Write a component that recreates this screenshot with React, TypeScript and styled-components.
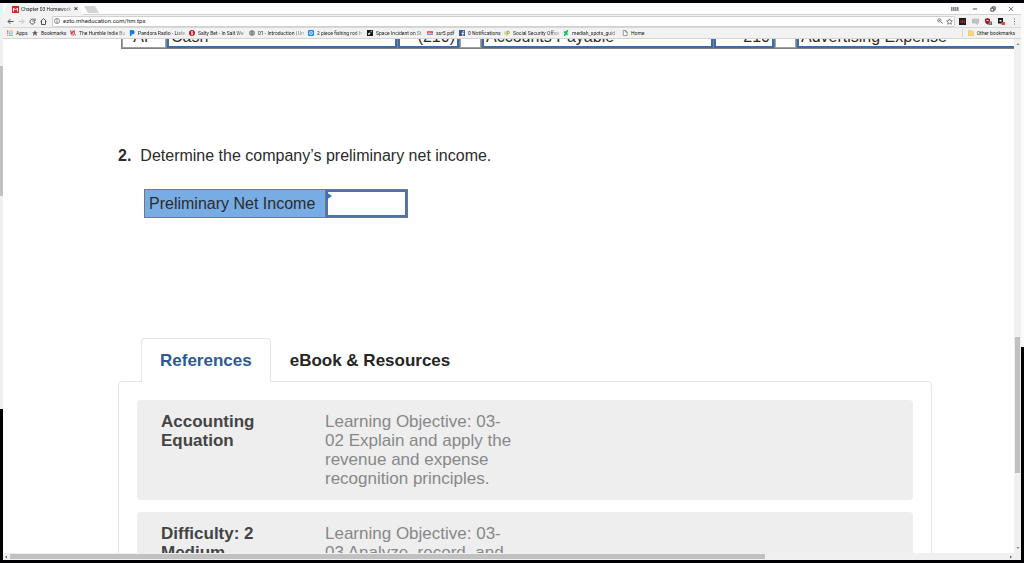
import React, { useState } from "react";
import styled, { createGlobalStyle, css } from "styled-components";

const GlobalStyle = createGlobalStyle`
  *, *::before, *::after { box-sizing: border-box; }
  html, body, #root { height: 100%; }
  body {
    margin: 0;
    background: #000004;
    overflow: hidden;
    font-family: "Liberation Sans", Arial, sans-serif;
    color: #2b2b2b;
  }
  button, input { font: inherit; color: inherit; }
  button { background: none; border: 0; padding: 0; cursor: pointer; }
`;

const Desktop = styled.div`
  display: flex;
  flex-direction: column;
  height: 100vh;
  padding: 3px 0;
`;

const DesktopRow = styled.div`
  display: flex;
  flex: 1;
  min-height: 0;
`;

const EdgeStrip = styled.div`
  display: flex;
  flex-direction: column;
  flex: 0 0 3px;
`;

const EdgePart = styled.div<{ $share: number; $color: string }>`
  flex: ${(p) => p.$share} 1 0;
  background: ${(p) => p.$color};
`;

const BrowserWindow = styled.div`
  display: flex;
  flex-direction: column;
  flex: 1;
  min-width: 0;
  background: #fff;
`;

/* ---------- browser chrome ---------- */

const Chrome = styled.header`
  font-family: Roboto, "Open Sans", sans-serif;
  font-size: 5px;
  line-height: 8px;
  color: #222;
`;

const TabStrip = styled.div`
  display: flex;
  height: 12px;
  background: #fdfdfd;
  border-bottom: 1px solid #d0d0d0;
`;

const PageTab = styled.div`
  display: flex;
  align-items: center;
  gap: 2px;
  width: 80px;
  height: 12px;
  padding: 0 5px 0 9px;
  background: #f2f2f2;
  clip-path: polygon(5px 0, 74px 0, 100% 100%, 0 100%);
`;

const FadingText = styled.span`
  flex: 1;
  min-width: 0;
  white-space: nowrap;
  mask-image: linear-gradient(to right, #000 calc(100% - 10px), rgba(0, 0, 0, 0.3));
`;

const TabClose = styled.button`
  font-size: 8px;
  line-height: 8px;
`;

const NewTab = styled.button`
  width: 15px;
  height: 7px;
  margin: 3px 0 0 1px;
  background: #d4d4d4;
  clip-path: polygon(0 0, 11px 0, 100% 100%, 4px 100%);
`;

const WindowControls = styled.div`
  display: flex;
  align-items: center;
  gap: 11px;
  margin-left: auto;
  padding-right: 7px;
`;

const IconButton = styled.button`
  display: flex;
  align-items: center;
  justify-content: center;
  width: 7px;
  height: 8px;
`;

const ProfileButton = styled.button`
  width: 8px;
  height: 4px;
  margin-right: 1px;
  background: repeating-linear-gradient(to right, #888 0 1px, #bbb 1px 2px);
`;

const Toolbar = styled.div`
  display: flex;
  align-items: center;
  height: 13px;
  padding: 0 3px 0 4px;
  background: #f2f2f2;
  border-bottom: 1px solid #d8d8d8;
`;

const NavButtons = styled.nav`
  display: flex;
  gap: 4px;
  width: 45px;
`;

const Omnibox = styled.div`
  display: flex;
  align-items: center;
  flex: 1;
  height: 11px;
  padding: 0 1px;
  gap: 3px;
  background: #fff;
  border: 1px solid #d0d0d0;
  border-radius: 1px;
`;

const AddressInput = styled.input`
  flex: 1;
  min-width: 0;
  height: 8px;
  padding: 0;
  border: 0;
  outline: 0;
  background: transparent;
  font-size: 6px;
`;

const Extensions = styled.div`
  display: flex;
  align-items: center;
  gap: 6px;
  padding-left: 4px;
`;

const BookmarkBar = styled.nav`
  display: flex;
  align-items: center;
  height: 11px;
  padding: 0 6px 0 4px;
  background: #f2f2f2;
  border-bottom: 1px solid #d4d4d4;
`;

const Bookmark = styled.a<{ $width: number }>`
  display: flex;
  align-items: center;
  gap: 3px;
  flex: 0 0 ${(p) => p.$width}px;
  min-width: 0;
  padding-right: 4px;
  color: inherit;
  text-decoration: none;
`;

const PlainText = styled.span`
  white-space: nowrap;
`;

const OtherBookmarks = styled.button`
  display: flex;
  align-items: center;
  gap: 3px;
  margin-left: auto;
  padding-left: 5px;
  border-left: 1px solid #d4d4d4;
`;

/* ---------- scroll bars ---------- */

const Viewport = styled.div`
  display: flex;
  flex: 1;
  min-height: 0;
`;

const VerticalBar = styled.div`
  display: flex;
  flex-direction: column;
  align-items: center;
  flex: 0 0 7px;
  padding: 3px 0;
  background: #f0f0f0;
`;

const HorizontalBar = styled.div`
  display: flex;
  align-items: center;
  flex: 0 0 7px;
  padding: 0 8px 0 1px;
  background: #f0f0f0;
`;

const Track = styled.div<{ $vertical?: boolean }>`
  display: flex;
  flex: 1;
  ${(p) =>
    p.$vertical
      ? css`
          flex-direction: column;
          width: 5px;
        `
      : css`
          height: 5px;
          margin: 0 2px;
        `}
`;

/* ---------- page ---------- */

const Page = styled.main`
  flex: 1;
  min-width: 0;
  overflow: hidden;
  font-size: 16px;
  line-height: 19px;
`;

const LedgerClip = styled.div`
  display: flex;
  align-items: flex-end;
  height: 10px;
  padding-left: 118px;
  overflow: hidden;
`;

const Ledger = styled.table`
  flex: none;
  width: calc(100% + 20px);
  table-layout: fixed;
  border-collapse: collapse;
`;

const LedgerCell = styled.td<{ $entry?: boolean; $align?: string }>`
  height: 28px;
  padding: 0 4px 2px;
  border: 1px solid #808080;
  box-shadow: inset 0 0 0 ${(p) => (p.$entry ? "2px #3b6dad" : "1px #a0a0a0")};
  text-align: ${(p) => p.$align || "left"};
  vertical-align: bottom;
  white-space: nowrap;
`;

const Question = styled.section`
  padding: 97px 0 0 115px;
`;

const Prompt = styled.p`
  display: flex;
  gap: 9px;
  margin: 0;
`;

const AnswerTable = styled.table`
  margin: 24px 0 0 26px;
  border-collapse: collapse;
  border: 1px solid #777;
`;

const AnswerLabel = styled.th`
  width: 181px;
  height: 28px;
  padding: 0 4px;
  background: #78ace5;
  border: 1px solid #777;
  font-weight: 400;
  text-align: left;
  white-space: nowrap;
`;

const AnswerCell = styled.td`
  position: relative;
  width: 82px;
  padding: 0;
`;

const AnswerInput = styled.input`
  display: block;
  width: 100%;
  height: 27px;
  padding: 0 6px;
  border: 2px solid #4674b5;
  outline: 0;
  background: #fff;
`;

const CellMarker = styled.span`
  position: absolute;
  top: 2px;
  left: 0;
  width: 6px;
  height: 8px;
  background: #3a6fba;
  clip-path: polygon(0 0, 100% 50%, 0 100%);
`;

const Resources = styled.section`
  margin: 120px 82px 0 115px;
`;

const TabList = styled.div`
  display: flex;
  padding-left: 23px;
`;

const ResourceTab = styled.button<{ $active: boolean }>`
  position: relative;
  height: 44px;
  padding: 0 18px;
  margin-bottom: -1px;
  border: 1px solid ${(p) => (p.$active ? "#e6e6e6" : "transparent")};
  border-bottom: 0;
  border-radius: 4px 4px 0 0;
  background: ${(p) => (p.$active ? "#fff" : "transparent")};
  color: ${(p) => (p.$active ? "#2c5a94" : "#262626")};
  font-size: 17px;
  font-weight: 700;
`;

const Panel = styled.div`
  display: flex;
  flex-direction: column;
  gap: 12px;
  padding: 18px;
  border: 1px solid #e6e6e6;
  border-radius: 4px;
`;

const Card = styled.article`
  display: flex;
  gap: 40px;
  padding: 12px 24px;
  background: #eee;
  border-radius: 4px;
`;

const CardTitle = styled.h3`
  width: 124px;
  margin: 0;
  color: #444;
  font-size: 17px;
`;

const CardText = styled.p`
  width: 192px;
  margin: 0;
  color: #888;
  font-size: 17px;
`;

/* ---------- icons ---------- */

const drawings: Record<string, React.ReactNode> = {
  mcgraw: (
    <>
      <path d="M0 0h14v14H0z" fill="#df2027" />
      <path d="M3 11V4l4 4 4-4v7" fill="none" stroke="#fff" strokeWidth="2" />
    </>
  ),
  back: <path d="M13 7H2M7 2L2 7l5 5" fill="none" stroke="#555" strokeWidth="2" />,
  forward: <path d="M1 7h11M7 2l5 5-5 5" fill="none" stroke="#c8c8c8" strokeWidth="2" />,
  reload: <path d="M12 8A5 5 0 1 1 10.500 3.500M12 1v5H7" fill="none" stroke="#555" strokeWidth="2" />,
  home: <path d="M1 7l6-6 6 6M3 6v7h8V6" fill="none" stroke="#555" strokeWidth="2" />,
  info: (
    <>
      <circle cx="7" cy="7" r="6" fill="none" stroke="#555" strokeWidth="1.500" />
      <path d="M7 6v5M7 3v2" stroke="#555" strokeWidth="2" />
    </>
  ),
  apps: (
    <>
      <path d="M0 1h3v3H0zM0 6h3v3H0z" fill="#e65243" />
      <path d="M5 1h3v3H5zM10 1h3v3h-3zM0 11h3v3H0z" fill="#f0a030" />
      <path d="M5 6h3v3H5zM10 6h3v3h-3z" fill="#4a90e2" />
      <path d="M5 11h3v3H5zM10 11h3v3h-3z" fill="#45ad5a" />
    </>
  ),
  star: <path d="M7 0l2 5h5l-4 3 2 6-5-4-5 4 2-6-4-3h5z" fill="#555" />,
  starLine: <path d="M7 1.500l1.700 3.800 4 .5-3 2.700.8 4L7 10.500l-3.500 2 .8-4-3-2.700 4-.5z" fill="none" stroke="#555" strokeWidth="1.500" />,
  humble: <path d="M1 1l4 12M5 1v7l5-7v6l3 6M1 8l5-3M8 13l-1-5" fill="none" stroke="#cb2d35" strokeWidth="2" />,
  pandora: <path d="M2 0h6c7 0 7 10 0 10H6v4H2z" fill="#167ee6" />,
  salty: (
    <>
      <circle cx="7" cy="7" r="7" fill="#c2182b" />
      <path d="M9 4H6v3h3v3H5M7 2v10" fill="none" stroke="#fff" strokeWidth="1.500" />
    </>
  ),
  globe: (
    <>
      <circle cx="7" cy="7" r="6.500" fill="#666" />
      <path d="M1 5h12M1 9h12M5 1c-2 5-1 8 0 12M9 1c2 5 1 8 0 12" fill="none" stroke="#ddd" />
    </>
  ),
  fishing: (
    <>
      <rect width="14" height="14" rx="3" fill="#1686ef" />
      <circle cx="7" cy="7" r="4" fill="none" stroke="#fff" strokeWidth="1.500" />
      <path d="M5 7h4" stroke="#fff" strokeWidth="2" />
    </>
  ),
  space: (
    <>
      <path d="M0 0h14v14H0z" fill="#181818" />
      <path d="M8 3l4-2-2 5zM2 9l5-4 1 4-4 3z" fill="#eee" />
    </>
  ),
  ssr: (
    <>
      <path d="M0 3h14v4H0z" fill="#e33" />
      <path d="M0 8h14v3H0z" fill="#5366d6" />
      <path d="M2 7h10" stroke="#fff" strokeWidth="2" strokeDasharray="2 1" />
    </>
  ),
  facebook: (
    <>
      <path d="M0 0h14v14H0z" fill="#3b5998" />
      <path d="M12 3h-1c-2 0-2 1-2 3v8M6 8h6" fill="none" stroke="#fff" strokeWidth="2" />
    </>
  ),
  social: (
    <>
      <path d="M0 4h5v2H0zM0 8h5v2H0z" fill="#b9c51d" />
      <path d="M7 13V3h3c4 0 4 5 0 5H7" fill="none" stroke="#8a9a1a" strokeWidth="2" />
    </>
  ),
  deviant: <path d="M12 0v3L9 8h3v3H7l-2 3H2v-3l3-4H2V3h5l2-3z" fill="#09ca4d" />,
  file: <path d="M3 1h5l4 4v8H3zM8 1v4h4" fill="#fff" stroke="#666" strokeWidth="1.500" />,
  folder: <path d="M0 1h8l1 2h4v11H0z" fill="#f6d77b" stroke="#e6c25e" />,
  zoom: (
    <>
      <circle cx="5.500" cy="5.500" r="4" fill="none" stroke="#555" strokeWidth="1.500" />
      <path d="M9 9l4 4M4 5.500h3" stroke="#555" strokeWidth="2" />
    </>
  ),
  extRed: (
    <>
      <path d="M0 0h14v14H0z" fill="#1c1c1c" />
      <path d="M2 4l3 6 2-6v6M9 4h3M9 7h3M12 7v3H9" fill="none" stroke="#b3332c" strokeWidth="1.500" />
    </>
  ),
  cast: <path d="M0 2h14v8H9l2 3-5-3H0z" fill="#c4c4c4" stroke="#aaa" />,
  shield: (
    <>
      <path d="M5 0l5 2v4c0 4-3 6-5 7-2-1-5-3-5-7V2z" fill="#a5141b" />
      <path d="M3 5h4" stroke="#fff" strokeWidth="2" />
      <path d="M7 7h7v7H7z" fill="#666" />
      <path d="M10.500 8v5" stroke="#fff" />
    </>
  ),
  blocker: (
    <>
      <path d="M0 0h10v11H0z" fill="#171717" />
      <path d="M3 4h4v3H3z" fill="#fff" />
      <path d="M7 8h7v6H7z" fill="#f04444" />
    </>
  ),
  menu: <path d="M6 1h2v2H6zM6 6h2v2H6zM6 11h2v2H6z" fill="#666" />,
  minimize: <path d="M2 7h10" stroke="#333" strokeWidth="2" />,
  restore: <path d="M2 5h7v7H2zM5 5V2h7v7H9" fill="none" stroke="#333" strokeWidth="2" />,
  close: <path d="M2 2l10 10M12 2L2 12" stroke="#333" strokeWidth="1.500" />,
  up: <path d="M2 10l5-6 5 6z" fill="#555" />,
  down: <path d="M2 4l5 6 5-6z" fill="#555" />,
  left: <path d="M10 2L4 7l6 5z" fill="#555" />,
  right: <path d="M4 2l6 5-6 5z" fill="#555" />,
};

const Drawing = styled.svg`
  flex: none;
`;

function Icon({ name, size = 7 }: { name: string; size?: number }) {
  return (
    <Drawing width={size} height={size} viewBox="0 0 14 14" aria-hidden="true">
      {drawings[name]}
    </Drawing>
  );
}

const bookmarks = [
  { icon: "apps", label: "Apps", width: 25, whole: true },
  { icon: "star", label: "Bookmarks", width: 38, whole: true },
  { icon: "humble", label: "The Humble Indie Bu", width: 59 },
  { icon: "pandora", label: "Pandora Radio - Liste", width: 60 },
  { icon: "salty", label: "Salty Bet - In Salt We", width: 60 },
  { icon: "globe", label: "01 - Introduction | Un", width: 59 },
  { icon: "fishing", label: "2 piece fishing rod h", width: 59 },
  { icon: "space", label: "Space Incident on St", width: 60 },
  { icon: "ssr", label: "ssr5.pdf", width: 32, whole: true },
  { icon: "facebook", label: "0 Notifications", width: 45, whole: true },
  { icon: "social", label: "Social Security Office", width: 59 },
  { icon: "deviant", label: "mediah_spots_guid", width: 59 },
  { icon: "file", label: "Home", width: 30, whole: true },
];

const ledgerColumns = [45, 231, 62, 22, 232, 61, 22];

const cards = [
  {
    title: "Accounting Equation",
    objective: "Learning Objective: 03-",
    text: "02 Explain and apply the revenue and expense recognition principles.",
  },
  {
    title: "Difficulty: 2 Medium",
    objective: "Learning Objective: 03-",
    text: "03 Analyze, record, and post transactions.",
  },
];

function BrowserChrome() {
  return (
    <Chrome>
      <TabStrip>
        <PageTab>
          <Icon name="mcgraw" />
          <FadingText>Chapter 03 Homework A</FadingText>
          <TabClose aria-label="Close tab">×</TabClose>
        </PageTab>
        <NewTab aria-label="New tab" />
        <WindowControls>
          <ProfileButton aria-label="Profile" />
          <IconButton aria-label="Minimize"><Icon name="minimize" size={6} /></IconButton>
          <IconButton aria-label="Restore"><Icon name="restore" size={6} /></IconButton>
          <IconButton aria-label="Close"><Icon name="close" size={6} /></IconButton>
        </WindowControls>
      </TabStrip>
      <Toolbar>
        <NavButtons>
          {["back", "forward", "reload", "home"].map((name) => (
            <IconButton key={name} aria-label={name}><Icon name={name} /></IconButton>
          ))}
        </NavButtons>
        <Omnibox>
          <Icon name="info" size={6} />
          <AddressInput aria-label="Address" defaultValue="ezto.mheducation.com/hm.tpx" />
          <IconButton aria-label="Zoom"><Icon name="zoom" size={6} /></IconButton>
          <IconButton aria-label="Bookmark this page"><Icon name="starLine" size={7} /></IconButton>
        </Omnibox>
        <Extensions>
          {["extRed", "cast", "shield", "blocker", "menu"].map((name) => (
            <IconButton key={name} aria-label={name}><Icon name={name} /></IconButton>
          ))}
        </Extensions>
      </Toolbar>
      <BookmarkBar>
        {bookmarks.map(({ icon, label, width, whole }) => (
          <Bookmark key={label} href="#" $width={width}>
            <Icon name={icon} size={6} />
            {whole ? <PlainText>{label}</PlainText> : <FadingText>{label}</FadingText>}
          </Bookmark>
        ))}
        <OtherBookmarks>
          <Icon name="folder" size={6} />
          <PlainText>Other bookmarks</PlainText>
        </OtherBookmarks>
      </BookmarkBar>
    </Chrome>
  );
}

export default function App() {
  const [active, setActive] = useState(0);
  return (
    <>
      <GlobalStyle />
      <Desktop>
        <DesktopRow>
          <EdgeStrip>
            <EdgePart $share={63} $color="#f0f0f0" />
            <EdgePart $share={130} $color="#c1c1c1" />
            <EdgePart $share={213} $color="#f0f0f0" />
            <EdgePart $share={151} $color="#000004" />
          </EdgeStrip>
          <BrowserWindow>
            <BrowserChrome />
            <Viewport>
              <Page>
                <LedgerClip>
                  <Ledger>
                    <colgroup>
                      {ledgerColumns.map((width, i) => (
                        <col key={i} width={width} />
                      ))}
                      <col />
                    </colgroup>
                    <tbody>
                      <tr>
                        <LedgerCell $align="center">AP</LedgerCell>
                        <LedgerCell $entry>Cash</LedgerCell>
                        <LedgerCell $entry $align="right">(210)</LedgerCell>
                        <LedgerCell />
                        <LedgerCell $entry>Accounts Payable</LedgerCell>
                        <LedgerCell $entry $align="right">210</LedgerCell>
                        <LedgerCell />
                        <LedgerCell $entry>Advertising Expense</LedgerCell>
                      </tr>
                    </tbody>
                  </Ledger>
                </LedgerClip>
                <Question>
                  <Prompt>
                    <b>2.</b>
                    <span>Determine the company’s preliminary net income.</span>
                  </Prompt>
                  <AnswerTable>
                    <tbody>
                      <tr>
                        <AnswerLabel scope="row">
                          <label htmlFor="net-income">Preliminary Net Income</label>
                        </AnswerLabel>
                        <AnswerCell>
                          <AnswerInput id="net-income" />
                          <CellMarker />
                        </AnswerCell>
                      </tr>
                    </tbody>
                  </AnswerTable>
                </Question>
                <Resources>
                  <TabList role="tablist">
                    {["References", "eBook & Resources"].map((label, i) => (
                      <ResourceTab
                        key={label}
                        role="tab"
                        aria-selected={active === i}
                        $active={active === i}
                        onClick={() => setActive(i)}
                      >
                        {label}
                      </ResourceTab>
                    ))}
                  </TabList>
                  <Panel role="tabpanel">
                    {cards.map((card) => (
                      <Card key={card.title}>
                        <CardTitle>{card.title}</CardTitle>
                        <CardText>
                          {card.objective}
                          <wbr />
                          {card.text}
                        </CardText>
                      </Card>
                    ))}
                  </Panel>
                </Resources>
              </Page>
              <VerticalBar>
                <Icon name="up" size={4} />
                <Track $vertical>
                  <EdgePart $share={290} $color="transparent" />
                  <EdgePart $share={135} $color="#c1c1c1" />
                  <EdgePart $share={73} $color="transparent" />
                </Track>
                <Icon name="down" size={4} />
              </VerticalBar>
            </Viewport>
            <HorizontalBar>
              <Icon name="left" size={4} />
              <Track>
                <EdgePart $share={755} $color="#c1c1c1" />
                <EdgePart $share={242} $color="transparent" />
              </Track>
              <Icon name="right" size={4} />
            </HorizontalBar>
          </BrowserWindow>
          <EdgeStrip>
            <EdgePart $share={344} $color="#fafafa" />
            <EdgePart $share={213} $color="#000004" />
          </EdgeStrip>
        </DesktopRow>
      </Desktop>
    </>
  );
}
